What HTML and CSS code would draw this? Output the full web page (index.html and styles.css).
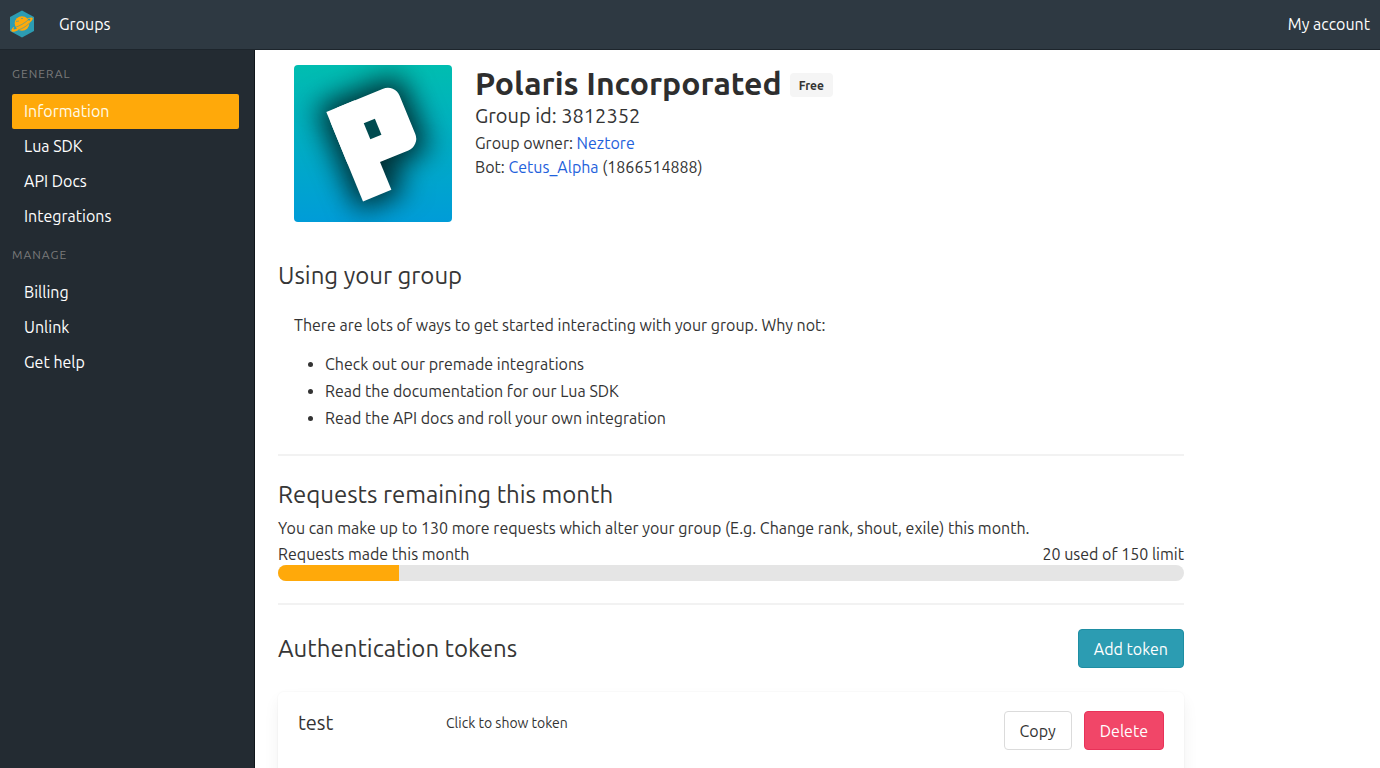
FILE: index.html
```html
<!DOCTYPE html>
<html lang="en">
<head>
<meta charset="utf-8">
<meta name="viewport" content="width=device-width, initial-scale=1">
<title>Polaris Incorporated</title>
<link rel="stylesheet" href="styles.css">
</head>
<body>
<header class="topbar">
  <a class="brand" href="#" aria-label="Home">
    <svg width="26" height="28" viewBox="0 0 26 28" aria-hidden="true">
      <path fill="#2c9cb2" d="M13 .5 25 7v14L13 27.500 1 21V7z"/>
      <circle cx="13" cy="13.500" r="7.300" fill="#ffa90a"/>
      <path fill="#ffa90a" d="M19 8c5-1.500 6 0 3.500 3C19 15 11 20 6 21.500c-4 1-5-1-1.500-4.500l1 .5c-2 2-1 2.500 1.500 1.500C12 17 18 13 21 10c1-1 0-1.500-2-1z"/>
      <path fill="none" stroke="#2c9cb2" stroke-width=".6" d="M5.500 17.500C10 16.500 17 12.500 20 9M9 20c4-1 8-3.500 11-6.500M7 11.500l3-.5M12 8.500h2"/>
    </svg>
  </a>
  <a class="toplink" href="#">Groups</a>
  <a class="toplink account" href="#">My account</a>
</header>
<div class="shell">
  <nav class="sidebar">
    <p class="menu-label">General</p>
    <ul class="menu-list">
      <li><a class="menu-item active" href="#">Information</a></li>
      <li><a class="menu-item" href="#">Lua SDK</a></li>
      <li><a class="menu-item" href="#">API Docs</a></li>
      <li><a class="menu-item" href="#">Integrations</a></li>
    </ul>
    <p class="menu-label">Manage</p>
    <ul class="menu-list">
      <li><a class="menu-item" href="#">Billing</a></li>
      <li><a class="menu-item" href="#">Unlink</a></li>
      <li><a class="menu-item" href="#">Get help</a></li>
    </ul>
  </nav>
  <main class="content">
    <section class="profile">
      <svg class="avatar" viewBox="0 0 474 471" role="img" aria-label="Group logo">
        <defs>
          <linearGradient id="sky" x1="0" y1="0" x2="0" y2="1">
            <stop offset="0" stop-color="#00bdb0"/>
            <stop offset="1" stop-color="#009cd8"/>
          </linearGradient>
          <filter id="soft" x="-60%" y="-60%" width="220%" height="220%" color-interpolation-filters="sRGB">
            <feGaussianBlur stdDeviation="42"/>
          </filter>
        </defs>
        <rect width="474" height="471" fill="url(#sky)"/>
        <g transform="translate(97 141) rotate(-22.300)">
          <g filter="url(#soft)" fill="#002c30">
            <rect x="-24" y="-24" width="270" height="250" rx="36"/>
            <rect x="-24" y="-24" width="150" height="336"/>
          </g>
          <rect width="222" height="200" rx="38" fill="#fff"/>
          <rect width="92" height="290" fill="#fff"/>
          <rect x="91" y="74" width="36" height="52" fill="#004b50"/>
        </g>
      </svg>
      <div class="details">
        <div class="title-row">
          <h1 class="title">Polaris Incorporated</h1>
          <span class="tag">Free</span>
        </div>
        <p class="group-id">Group id: 3812352</p>
        <p class="line">Group owner: <a class="link" href="#">Neztore</a></p>
        <p class="line">Bot: <a class="link" href="#">Cetus_Alpha</a> (1866514888)</p>
      </div>
    </section>
    <section class="usage">
      <h2 class="heading">Using your group</h2>
      <div class="intro">
        <p>There are lots of ways to get started interacting with your group. Why not:</p>
        <ul class="bullets">
          <li>Check out our premade integrations</li>
          <li>Read the documentation for our Lua SDK</li>
          <li>Read the API docs and roll your own integration</li>
        </ul>
      </div>
    </section>
    <hr class="rule">
    <section>
      <h2 class="heading">Requests remaining this month</h2>
      <p class="note">You can make up to 130 more requests which alter your group (E.g. Change rank, shout, exile) this month.</p>
      <div class="meter-labels"><span>Requests made this month</span><span>20 used of 150 limit</span></div>
      <div class="meter" role="progressbar" aria-label="Requests made this month" aria-valuemin="0" aria-valuemax="150" aria-valuenow="20"><div class="meter-fill" style="width:13.4%"></div></div>
    </section>
    <hr class="rule">
    <section>
      <div class="token-head">
        <h2 class="heading">Authentication tokens</h2>
        <button class="btn btn-primary" type="button">Add token</button>
      </div>
      <div class="card">
        <p class="token-name">test</p>
        <p class="token-value">Click to show token</p>
        <div class="actions">
          <button class="btn btn-plain" type="button">Copy</button>
          <button class="btn btn-danger" type="button">Delete</button>
        </div>
      </div>
    </section>
  </main>
</div>
</body>
</html>
```
FILE: styles.css
```css
* { box-sizing: border-box; }
html { height: 100%; }
body {
  margin: 0;
  height: 100%;
  display: flex;
  flex-direction: column;
  overflow: hidden;
  font-family: Ubuntu, "Noto Sans", sans-serif;
  font-size: 16px;
  line-height: 24px;
  color: #333;
  background: #fff;
}
h1, h2, p, ul { margin: 0; padding: 0; font-weight: 400; }
a { text-decoration: none; }
.topbar {
  display: flex;
  flex: none;
  align-items: center;
  height: 50px;
  padding: 0 10px 1px 9px;
  background: #2e3942;
  border-bottom: 1px solid #1d252c;
}
.brand { display: flex; margin-right: 24px; }
.toplink { color: #fff; }
.account { margin-left: auto; }
.shell { display: flex; flex: 1; min-height: 0; }
.sidebar {
  flex: none;
  width: 255px;
  padding: 12px 15px 0 12px;
  background: #232b32;
  border-right: 1px solid #10161b;
}
.menu-label {
  font-size: 12px;
  letter-spacing: 1px;
  text-transform: uppercase;
  color: #7a7a7a;
}
.menu-list { list-style: none; margin: 8px 0 9px; }
.menu-item { display: block; height: 35px; padding: 5px 12px; color: #fff; border-radius: 2px; }
.menu-item.active { background: #ffa90a; color: #fffbe8; }
.content { flex: 1; max-width: 953px; padding: 15px 24px 0 23px; }
.profile { display: flex; gap: 23px; padding-left: 16px; }
.avatar { flex: none; width: 158px; height: 157px; border-radius: 4px; }
.title-row { display: flex; align-items: center; gap: 8px; height: 36px; }
.title { font-size: 32px; line-height: 36px; font-weight: 700; color: #2e2e2e; }
.tag {
  height: 24px;
  margin-top: 4px;
  padding: 1px 9px;
  font-size: 12px;
  line-height: 24px;
  font-weight: 600;
  background: #f5f5f5;
  border-radius: 4px;
}
.group-id { font-size: 20px; line-height: 30px; }
.line { line-height: 24px; }
.link { color: #1f62dc; }
.usage { padding-top: 37px; }
.heading { font-size: 24px; line-height: 34px; color: #363636; }
.intro { padding: 20px 16px 0; }
.bullets { margin-top: 14px; padding-left: 31px; line-height: 27px; }
.rule { height: 2px; margin: 22px 0; border: 0; background: #f2f2f2; }
.bullets + .rule { margin-top: 21px; }
.note { line-height: 32px; }
.meter-labels { display: flex; justify-content: space-between; line-height: 21px; }
.meter { height: 16px; border-radius: 8px; overflow: hidden; background: #e5e5e5; }
.meter-fill { height: 100%; background: #ffa90a; }
.token-head { display: flex; align-items: center; justify-content: space-between; padding-top: 2px; }
.btn {
  height: 39px;
  padding: 0 15px;
  border: 1px solid;
  border-radius: 4px;
  font: inherit;
  cursor: pointer;
}
.btn-primary { color: #fff; background: #2c9cb2; border-color: #1e8ea3; }
.btn-plain { color: #333; background: #fff; border-color: #dbdbdb; }
.btn-danger { color: #fff; background: #f14668; border-color: #e83259; }
.card {
  display: flex;
  min-height: 96px;
  margin-top: 24px;
  padding: 19px 20px;
  border-radius: 6px;
  box-shadow: 0 8px 16px rgba(10, 10, 10, .06), 0 0 1px 1px rgba(10, 10, 10, .02);
}
.token-name { width: 148px; font-size: 20px; }
.token-value { font-size: 14px; }
.actions { display: flex; gap: 12px; margin-left: auto; }
```
